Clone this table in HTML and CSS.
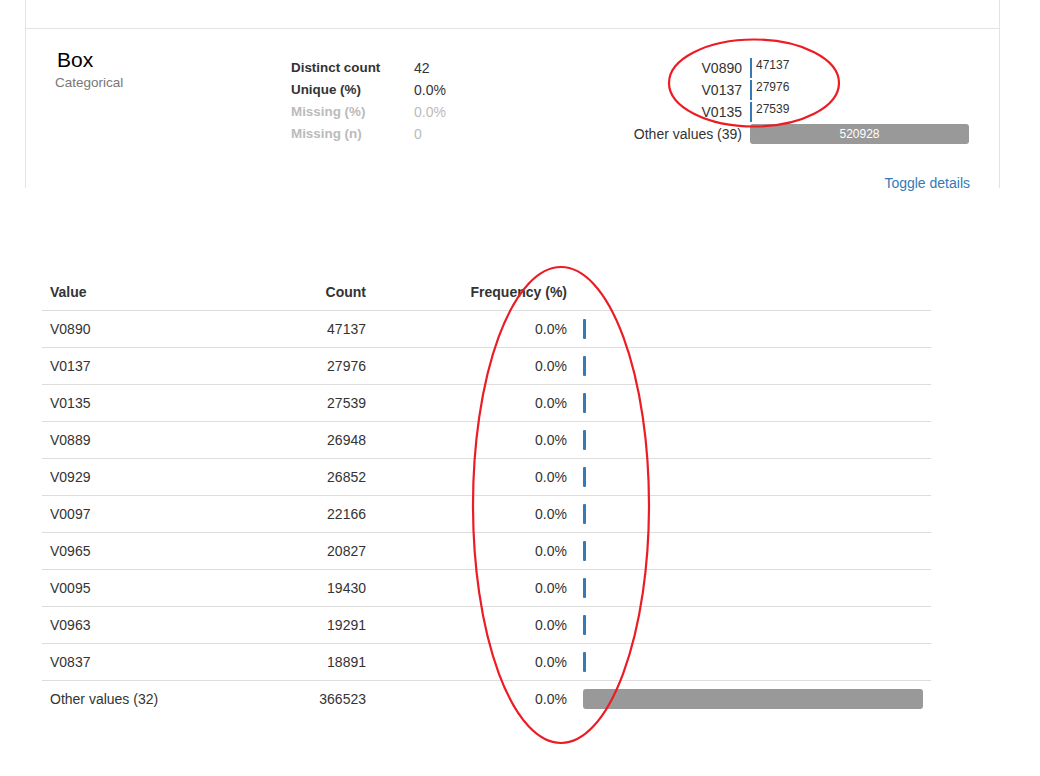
FILE: index.html
```html
<!DOCTYPE html>
<html>
<head>
<meta charset="utf-8">
<link rel="stylesheet" href="styles.css">
</head>
<body>
<div class="panel">
  <div class="panel-top"></div>
  <div class="var-row">
    <div class="var-name">
      <div class="title">Box</div>
      <div class="vtype">Categorical</div>
    </div>
    <div class="stats">
      <div class="stat"><span class="lbl">Distinct count</span><span class="val">42</span></div>
      <div class="stat"><span class="lbl">Unique (%)</span><span class="val">0.0%</span></div>
      <div class="stat ignore"><span class="lbl">Missing (%)</span><span class="val">0.0%</span></div>
      <div class="stat ignore"><span class="lbl">Missing (n)</span><span class="val">0</span></div>
    </div>
    <div class="mini">
      <div class="mini-row"><span class="mlabel">V0890</span><span class="mbar"><span class="tick"></span><span class="mnum">47137</span></span></div>
      <div class="mini-row"><span class="mlabel">V0137</span><span class="mbar"><span class="tick"></span><span class="mnum">27976</span></span></div>
      <div class="mini-row"><span class="mlabel">V0135</span><span class="mbar"><span class="tick"></span><span class="mnum">27539</span></span></div>
      <div class="mini-row"><span class="mlabel">Other values (39)</span><span class="mbar"><span class="graybar">520928</span></span></div>
    </div>
  </div>
  <div class="toggle-row"><a class="toggle">Toggle details</a></div>
  <svg class="ring ring1" width="176" height="92" viewBox="0 0 176 92"><ellipse cx="88" cy="46" rx="85" ry="43.5" fill="none" stroke="#ec1c24" stroke-width="2.2"/></svg>
</div>

<div class="freq-wrap">
  <table class="freq">
    <thead>
      <tr><th class="c-val">Value</th><th class="c-num">Count</th><th class="c-num c-pct">Frequency (%)</th><th class="c-bar"></th></tr>
    </thead>
    <tbody>
      <tr><td>V0890</td><td class="c-num">47137</td><td class="c-num">0.0%</td><td class="c-bar"><div class="bar"></div></td></tr>
      <tr><td>V0137</td><td class="c-num">27976</td><td class="c-num">0.0%</td><td class="c-bar"><div class="bar"></div></td></tr>
      <tr><td>V0135</td><td class="c-num">27539</td><td class="c-num">0.0%</td><td class="c-bar"><div class="bar"></div></td></tr>
      <tr><td>V0889</td><td class="c-num">26948</td><td class="c-num">0.0%</td><td class="c-bar"><div class="bar"></div></td></tr>
      <tr><td>V0929</td><td class="c-num">26852</td><td class="c-num">0.0%</td><td class="c-bar"><div class="bar"></div></td></tr>
      <tr><td>V0097</td><td class="c-num">22166</td><td class="c-num">0.0%</td><td class="c-bar"><div class="bar"></div></td></tr>
      <tr><td>V0965</td><td class="c-num">20827</td><td class="c-num">0.0%</td><td class="c-bar"><div class="bar"></div></td></tr>
      <tr><td>V0095</td><td class="c-num">19430</td><td class="c-num">0.0%</td><td class="c-bar"><div class="bar"></div></td></tr>
      <tr><td>V0963</td><td class="c-num">19291</td><td class="c-num">0.0%</td><td class="c-bar"><div class="bar"></div></td></tr>
      <tr><td>V0837</td><td class="c-num">18891</td><td class="c-num">0.0%</td><td class="c-bar"><div class="bar"></div></td></tr>
      <tr class="other"><td>Other values (32)</td><td class="c-num">366523</td><td class="c-num">0.0%</td><td class="c-bar"><div class="bar bar-other"></div></td></tr>
    </tbody>
  </table>
  <svg class="ring ring2" width="184" height="484" viewBox="0 0 184 484"><ellipse cx="92" cy="242" rx="88" ry="238" fill="none" stroke="#ec1c24" stroke-width="2.2"/></svg>
</div>
</body>
</html>
```

FILE: styles.css
```css
html, body {
  margin: 0;
  padding: 0;
  background: #fff;
}
body {
  font-family: "Liberation Sans", Arial, sans-serif;
  font-size: 14px;
  color: #333;
  line-height: 20px;
  min-height: 776px;
}

.panel {
  position: relative;
  margin-left: 25px;
  width: 973px;
  height: 188px;
  border-left: 1px solid #e3e3e3;
  border-right: 1px solid #e3e3e3;
}
.panel-top {
  height: 28px;
  border-bottom: 1px solid #e3e3e3;
}

.var-row {
  display: flex;
  padding-top: 19px;
  padding-left: 31px;
}
.var-name {
  width: 234px;
}
.title {
  font-size: 21px;
  line-height: 24px;
  color: #000;
}
.vtype {
  color: #777;
  font-size: 13.5px;
  line-height: 20px;
  margin-left: -2px;
  margin-top: 1px;
}

.stats {
  width: 309px;
  padding-top: 9px;
}
.stat {
  display: flex;
  height: 22px;
  align-items: center;
}
.lbl {
  width: 123px;
  font-weight: bold;
  font-size: 13.4px;
}
.val {
  font-size: 14px;
}
.stat.ignore {
  color: #bbb;
}

.mini {
  padding-top: 9px;
}
.mini-row {
  display: flex;
  height: 22px;
  align-items: center;
}
.mlabel {
  width: 142px;
  text-align: right;
  margin-right: 8px;
}
.mbar {
  width: 219px;
  display: flex;
  align-items: flex-start;
  height: 20px;
}
.tick {
  width: 2px;
  height: 20px;
  background: #337ab7;
}
.mnum {
  font-size: 12px;
  line-height: 15px;
  margin-left: 4px;
}
.graybar {
  width: 219px;
  height: 20px;
  background: #999;
  border-radius: 3px;
  color: #fff;
  font-size: 12px;
  line-height: 20px;
  text-align: center;
}

.toggle-row {
  display: flex;
  justify-content: flex-end;
  padding-right: 29px;
  margin-top: 28px;
}
.toggle {
  color: #337ab7;
  font-size: 14px;
  line-height: 20px;
}

.ring {
  position: absolute;
  pointer-events: none;
}
.ring1 {
  left: 640px;
  top: 37px;
}

.freq-wrap {
  position: relative;
  margin-top: 86px;
  margin-left: 42px;
  width: 889px;
  padding-bottom: 50px;
}
.freq {
  width: 889px;
  border-collapse: collapse;
  border-spacing: 0;
}
.freq th {
  text-align: left;
  font-weight: bold;
  padding: 8px;
  line-height: 20px;
  border-bottom: 1px solid #ddd;
}
.freq td {
  padding: 8px;
  line-height: 20px;
  border-top: 1px solid #ddd;
  height: 20px;
}
.freq th.c-num, .freq td.c-num {
  text-align: right;
}
.c-val { width: 115px; }
.freq th.c-num { width: 185px; }
.freq td.c-bar, .freq th.c-bar {
  width: 340px;
  padding-left: 8px;
}
.bar {
  width: 3px;
  height: 20px;
  background: #337ab7;
  border-radius: 1px;
}
.bar-other {
  width: 340px;
  background: #999;
  border-radius: 3px;
}
.ring2 {
  left: 427px;
  top: -11px;
}
```
